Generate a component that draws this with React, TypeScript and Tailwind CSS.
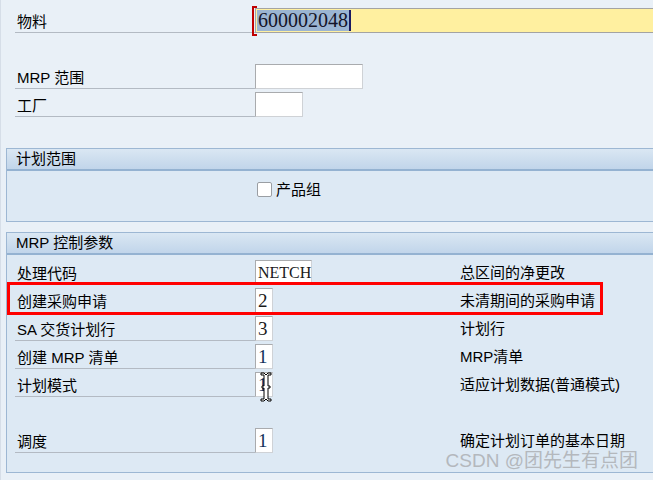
import React from 'react';

const sans = "font-['Liberation_Sans','Noto_Sans_CJK_SC',sans-serif]";
const serif = "font-['Liberation_Serif','Noto_Serif_CJK_SC',serif]";

type Param = { label: string; value?: string; width?: number; desc?: string; blue?: boolean };

const params: Param[] = [
  { label: '处理代码', value: 'NETCH', width: 57, desc: '总区间的净更改' },
  { label: '创建采购申请', value: '2', width: 18, desc: '未清期间的采购申请' },
  { label: 'SA 交货计划行', value: '3', width: 18, desc: '计划行' },
  { label: '创建 MRP 清单', value: '1', width: 18, desc: 'MRP清单', blue: true },
  { label: '计划模式', value: '1', width: 18, desc: '适应计划数据(普通模式)', blue: true },
  { label: '' },
  { label: '调度', value: '1', width: 18, desc: '确定计划订单的基本日期', blue: true },
];

function Label({ text }: { text: string }) {
  return (
    <div className="w-[240px] h-[25px] shrink-0 border-b border-[#b3bac3] flex items-center pl-[2px] pt-[2px] text-[15px] text-black leading-none">
      {text}
    </div>
  );
}

function Box({ width, value, blue, small }: { width: number; value?: string; blue?: boolean; small?: boolean }) {
  return (
    <div
      className={`h-[25px] shrink-0 bg-white border border-[#a9abae] border-r-[#cfd2d6] border-b-[#cfd2d6] flex items-center px-[2px] ${serif} ${
        small ? 'text-[16px]' : 'text-[19px]'
      } ${blue ? 'text-[#10305a]' : 'text-[#1a1a1a]'} leading-none`}
      style={{ width }}
    >
      {value}
    </div>
  );
}

function GroupHeader({ title }: { title: string }) {
  return (
    <div className="h-[22px] bg-linear-to-b from-[#dae7f3] to-[#c1d5ea] border-b-2 border-[#94b2d1] flex items-center pl-[9px] text-[15px] text-black">
      {title}
    </div>
  );
}

export default function App() {
  return (
    <div className={`relative w-[653px] h-[480px] overflow-hidden bg-[#e9f0f7] border-l border-[#d6dee8] ${sans}`}>
      {/* header fields */}
      <div className="pl-[14px] pt-[5px]">
        <div className="flex items-end h-[28px]">
          <Label text="物料" />
          <div className="relative flex-1 h-[25px] bg-[#fff0a0] border border-r-0 border-[#a3a3a3] flex items-center pl-[1px]">
            <span className="absolute -left-[4px] -top-[3px] h-[30px] w-[5px] border-l-2 border-t-2 border-b-2 border-[#c00000]" />
            <span className={`bg-[#9bb5d2] text-[#141428] ${serif} text-[20px] leading-[21px] px-[1px]`}>600002048</span>
            <span className="w-[2px] h-[21px] bg-[#1a1a60]" />
          </div>
        </div>
        <div className="h-[28px]" />
        <div className="flex items-end h-[28px]">
          <Label text="MRP 范围" />
          <Box width={108} />
        </div>
        <div className="flex items-end h-[28px]">
          <Label text="工厂" />
          <Box width={48} />
        </div>
      </div>

      {/* 计划范围 */}
      <div className="ml-[5px] mt-[31px] border border-r-0 border-[#9db7d3] bg-[#dde9f4]">
        <GroupHeader title="计划范围" />
        <div className="h-[50px] pl-[250px] pt-[11px] flex items-start gap-[4px]">
          <div className="w-[15px] h-[15px] bg-white border border-[#9a9ea3] rounded-[2px]" />
          <span className="text-[15px] leading-[16px] text-black">产品组</span>
        </div>
      </div>

      {/* MRP 控制参数 */}
      <div className="ml-[5px] mt-[10px] border border-r-0 border-[#9db7d3] bg-[#dde9f4]">
        <GroupHeader title="MRP 控制参数" />
        <div className="relative pl-[8px] pt-[2px] pb-[19px]">
          {params.map((p, i) =>
            p.label ? (
              <div key={i} className="flex items-end h-[28px]">
                <Label text={p.label} />
                <div className="w-[205px] shrink-0">
                  <Box width={p.width ?? 18} value={p.value} blue={p.blue} small={p.value === 'NETCH'} />
                </div>
                <div className="h-[25px] flex items-center pt-[2px] text-[15px] text-black whitespace-nowrap">{p.desc}</div>
              </div>
            ) : (
              <div key={i} className="h-[28px]" />
            )
          )}
          {/* annotation */}
          <div className="absolute left-0 top-[27px] w-[596px] h-[33px] border-[3px] border-[#ff0000]" />
          {/* mouse cursor */}
          <svg className="absolute left-[253px] top-[117px]" width="12" height="31" viewBox="0 0 12 31">
            <path
              d="M1 1h3l2 2l2-2h3v2h-3v11h2v2h-2v11h3v2h-3l-2-2l-2 2h-3v-2h3v-11h-2v-2h2v-11h-3z"
              fill="#fff"
              stroke="#000"
              strokeWidth="1"
            />
          </svg>
        </div>
      </div>

      <div className="absolute right-[15px] bottom-[10px] text-[19px] leading-none text-[#b4b8bd] whitespace-nowrap">
        CSDN @团先生有点团
      </div>
    </div>
  );
}
